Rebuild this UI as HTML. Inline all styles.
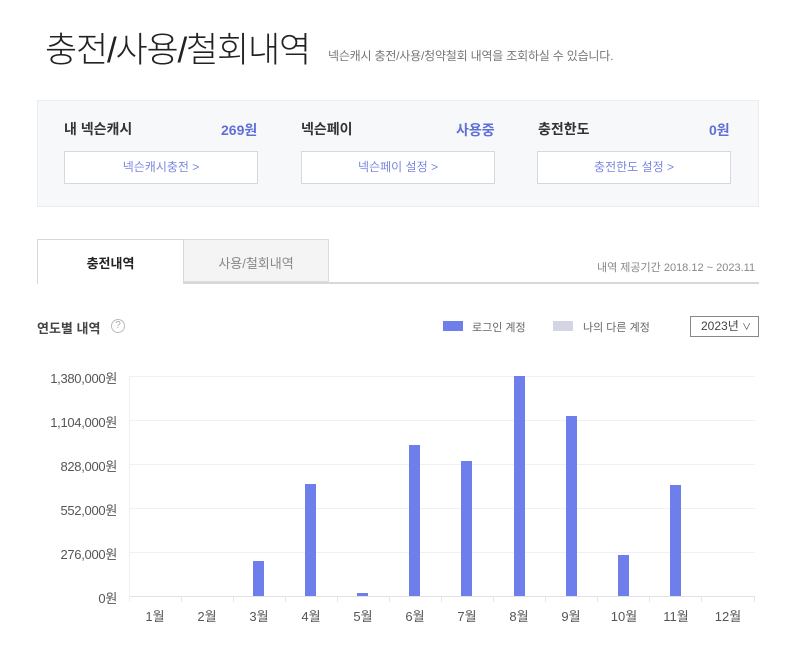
<!DOCTYPE html>
<html><head><meta charset="utf-8"><style>
*{margin:0;padding:0;box-sizing:border-box}
body{width:800px;height:647px;background:#fff;font-family:"Liberation Sans","Noto Sans CJK KR",sans-serif;position:relative;overflow:hidden;color:#222}
.a{position:absolute;white-space:nowrap}
.box{position:absolute;left:37px;top:100px;width:722px;height:107px;background:#f7f8fa;border:1px solid #ebedf0}
.btn{position:absolute;top:151px;width:194px;height:33px;background:#fff;border:1px solid #d6d8dd;color:#7b86e0;font-size:12px;text-align:center;line-height:31px}
.lbl{font-size:14px;font-weight:bold;color:#333;top:119px}
.val{font-size:14px;font-weight:bold;color:#5f6fd8;top:120px}
.grid{position:absolute;left:129px;width:626px;height:1px;background:#f0f0f2}
.yl{position:absolute;right:683px;font-size:13px;color:#555;letter-spacing:-0.3px}
.bar{position:absolute;width:11px;background:#6e7eeb}
.ml{position:absolute;top:606px;font-size:13px;color:#555;width:52px;text-align:center}
.tk{position:absolute;top:596px;width:1px;height:6px;background:#e6e6ea}
</style></head><body>
<div class="a" style="left:45px;top:22px;font-size:35px;font-weight:300;color:#222;letter-spacing:-1.2px">충전/사용/철회내역</div>
<div class="a" style="left:328px;top:47px;font-size:12px;color:#777;letter-spacing:-0.2px">넥슨캐시 충전/사용/청약철회 내역을 조회하실 수 있습니다.</div>
<div class="box"></div>
<div class="a lbl" style="left:64px">내 넥슨캐시</div>
<div class="a val" style="left:221px">269원</div>
<div class="a lbl" style="left:301px">넥슨페이</div>
<div class="a val" style="left:456px">사용중</div>
<div class="a lbl" style="left:538px">충전한도</div>
<div class="a val" style="left:709px">0원</div>
<div class="btn" style="left:64px">넥슨캐시충전 &gt;</div>
<div class="btn" style="left:301px">넥슨페이 설정 &gt;</div>
<div class="btn" style="left:537px">충전한도 설정 &gt;</div>
<div style="position:absolute;left:37px;top:282px;width:722px;height:2px;background:#d8d8dc"></div>
<div style="position:absolute;left:37px;top:239px;width:147px;height:45px;background:#fff;border:1px solid #d8d8dc;border-bottom:none;font-size:13px;font-weight:bold;text-align:center;line-height:48px">충전내역</div>
<div style="position:absolute;left:184px;top:239px;width:145px;height:43px;background:#f4f4f5;border:1px solid #dcdce0;border-left:none;font-size:13px;color:#888;text-align:center;line-height:48px">사용/철회내역</div>
<div class="a" style="left:597px;top:259px;font-size:11px;color:#888">내역 제공기간 2018.12 ~ 2023.11</div>
<div class="a" style="left:37px;top:318px;font-size:13px;font-weight:bold;color:#444">연도별 내역</div>
<div class="a" style="left:111px;top:319px;width:14px;height:14px;border:1px solid #bbb;border-radius:50%;font-size:10px;color:#aaa;text-align:center;line-height:12px">?</div>
<div class="a" style="left:443px;top:321px;width:20px;height:10px;background:#6e7eeb"></div>
<div class="a" style="left:472px;top:319px;font-size:11px;color:#666">로그인 계정</div>
<div class="a" style="left:553px;top:321px;width:20px;height:10px;background:#d3d5e2"></div>
<div class="a" style="left:583px;top:319px;font-size:11px;color:#666">나의 다른 계정</div>
<div class="a" style="left:690px;top:316px;width:69px;height:21px;border:1px solid #888;font-size:12px;color:#444;padding-left:10px;line-height:19px">2023년 <span style="font-size:9px">∨</span></div>
<div class="grid" style="top:376px"></div><div class="grid" style="top:420px"></div><div class="grid" style="top:464px"></div><div class="grid" style="top:508px"></div><div class="grid" style="top:552px"></div><div class="grid" style="top:596px;background:#e2e2e6"></div>
<div style="position:absolute;left:129px;top:376px;width:1px;height:226px;background:#f0f0f2"></div>
<div class="yl" style="top:368px">1,380,000원</div>
<div class="yl" style="top:412px">1,104,000원</div>
<div class="yl" style="top:456px">828,000원</div>
<div class="yl" style="top:500px">552,000원</div>
<div class="yl" style="top:544px">276,000원</div>
<div class="yl" style="top:588px">0원</div>
<div class="tk" style="left:181px"></div><div class="tk" style="left:233px"></div><div class="tk" style="left:285px"></div><div class="tk" style="left:337px"></div><div class="tk" style="left:389px"></div><div class="tk" style="left:441px"></div><div class="tk" style="left:493px"></div><div class="tk" style="left:545px"></div><div class="tk" style="left:597px"></div><div class="tk" style="left:649px"></div><div class="tk" style="left:701px"></div><div class="tk" style="left:754px"></div>
<div class="bar" style="left:253px;top:561px;height:35px"></div>
<div class="bar" style="left:305px;top:484px;height:112px"></div>
<div class="bar" style="left:357px;top:593px;height:3px"></div>
<div class="bar" style="left:409px;top:445px;height:151px"></div>
<div class="bar" style="left:461px;top:461px;height:135px"></div>
<div class="bar" style="left:514px;top:376px;height:220px"></div>
<div class="bar" style="left:566px;top:416px;height:180px"></div>
<div class="bar" style="left:618px;top:555px;height:41px"></div>
<div class="bar" style="left:670px;top:485px;height:111px"></div>
<div class="ml" style="left:129px">1월</div><div class="ml" style="left:181px">2월</div><div class="ml" style="left:233px">3월</div><div class="ml" style="left:285px">4월</div><div class="ml" style="left:337px">5월</div><div class="ml" style="left:389px">6월</div><div class="ml" style="left:441px">7월</div><div class="ml" style="left:493px">8월</div><div class="ml" style="left:545px">9월</div><div class="ml" style="left:598px">10월</div><div class="ml" style="left:650px">11월</div><div class="ml" style="left:702px">12월</div>
</body></html>
